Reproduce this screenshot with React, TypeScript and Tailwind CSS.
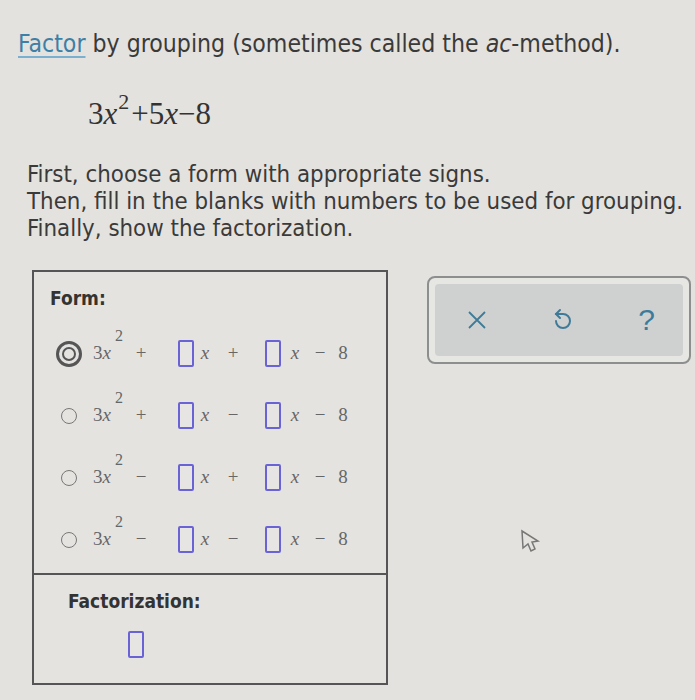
import React from 'react';

const sans = { fontFamily: '"DejaVu Sans Condensed", "Lato", sans-serif' };

const Blank = () => (
    <span className="inline-block w-[16px] h-[27px] border-2 border-[#6a63d6] rounded-[2px] bg-[#e6e5e3]" />
);

const Radio = ({ selected }: { selected?: boolean }) =>
    selected ? (
        <span className="flex items-center justify-center w-[26px] h-[26px] rounded-full border-[3px] border-[#555]">
            <span className="w-[14px] h-[14px] rounded-full border-[2px] border-[#555]" />
        </span>
    ) : (
        <span className="w-[16px] h-[16px] rounded-full border-[1.5px] border-[#777]" />
    );

const FormRow = ({ s1, s2, selected }: { s1: string; s2: string; selected?: boolean }) => (
    <div className="flex items-center h-[62px] text-[#666] text-[19px] font-['Liberation_Serif',serif]">
        <div className="w-[38px] flex justify-center">
            <Radio selected={selected} />
        </div>
        <div className="w-[42px] pl-[5px] relative">
            3<i>x</i>
            <span className="absolute left-[27px] -top-[15px] text-[16px]">2</span>
        </div>
        <div className="w-[22px] text-center">{s1}</div>
        <div className="w-[42px] flex justify-end"><Blank /></div>
        <div className="w-[22px] text-center"><i>x</i></div>
        <div className="w-[34px] text-center">{s2}</div>
        <div className="w-[31px] flex justify-end"><Blank /></div>
        <div className="w-[28px] text-center"><i>x</i></div>
        <div className="w-[22px] text-center">−</div>
        <div className="w-[24px] text-center">8</div>
    </div>
);

export default function App() {
    return (
        <div className="w-[695px] h-[700px] bg-[#e3e2de] text-[#3a3a3a] overflow-hidden" style={sans}>
            <div className="pl-[18px] pt-[27px] text-[24.6px] leading-[34px]">
                <span className="text-[#3d7fa6] underline underline-offset-4 decoration-[#7ab0cf]">Factor</span> by grouping (sometimes called the <i>ac</i>-method).
            </div>
            <div className="pl-[88px] pt-[36px] text-[31px] leading-[34px] text-[#333] font-['Liberation_Serif',serif]">
                3<i>x</i><sup className="text-[22px] ml-[1px] -top-[15px]">2</sup>
                <span className="ml-[2px]">+5<i>x</i>−8</span>
            </div>
            <div className="pl-[27px] pt-[30px] text-[23.8px] leading-[27px]">
                <div>First, choose a form with appropriate signs.</div>
                <div>Then, fill in the blanks with numbers to be used for grouping.</div>
                <div>Finally, show the factorization.</div>
            </div>
            <div className="flex items-start pl-[32px] pt-[28px] gap-[39px]">
                <div className="w-[356px] border-2 border-[#555] bg-[#e4e3e0]">
                    <div className="pl-[16px] pt-[12px] pb-[2px]">
                        <div className="font-bold text-[19px] text-[#333]">Form:</div>
                        <div className="mt-[10px]">
                            <FormRow s1="+" s2="+" selected />
                            <FormRow s1="+" s2="−" />
                            <FormRow s1="−" s2="+" />
                            <FormRow s1="−" s2="−" />
                        </div>
                    </div>
                    <div className="border-t-2 border-[#555] pl-[34px] pt-[12px] h-[110px]">
                        <div className="font-bold text-[19px] text-[#333]">Factorization:</div>
                        <div className="pl-[60px] pt-[16px]"><Blank /></div>
                    </div>
                </div>
                <div className="mt-[6px] w-[264px] h-[88px] rounded-[8px] border-2 border-[#8d8f8e] bg-[#e6e6e3] p-[6px]">
                    <div className="h-full rounded-[4px] bg-[#cfd1d1] flex items-center justify-between pl-[31px] pr-[28px] text-[#3f7b98]">
                        <svg width="22" height="22" viewBox="0 0 22 22" fill="none" stroke="currentColor" strokeWidth="1.8">
                            <path d="M3 3 L19 19 M19 3 L3 19" />
                        </svg>
                        <svg width="22" height="26" viewBox="0 0 22 26" fill="none" stroke="currentColor" strokeWidth="2" strokeLinecap="round">
                            <path d="M8 3 L4 7 L8 11" />
                            <path d="M4 7 H11 A7 7 0 1 1 4 14" />
                        </svg>
                        <span className="text-[30px] leading-none font-['Liberation_Sans',sans-serif]">?</span>
                    </div>
                </div>
            </div>
            <div className="relative">
                <svg className="absolute left-[520px] -top-[156px]" width="22" height="24" viewBox="0 0 22 24" fill="none" stroke="#777" strokeWidth="1.5">
                    <path d="M2 2 L18 12 L12 13 L15 20 L11 22 L8 15 L3 19 Z" />
                </svg>
            </div>
        </div>
    );
}
